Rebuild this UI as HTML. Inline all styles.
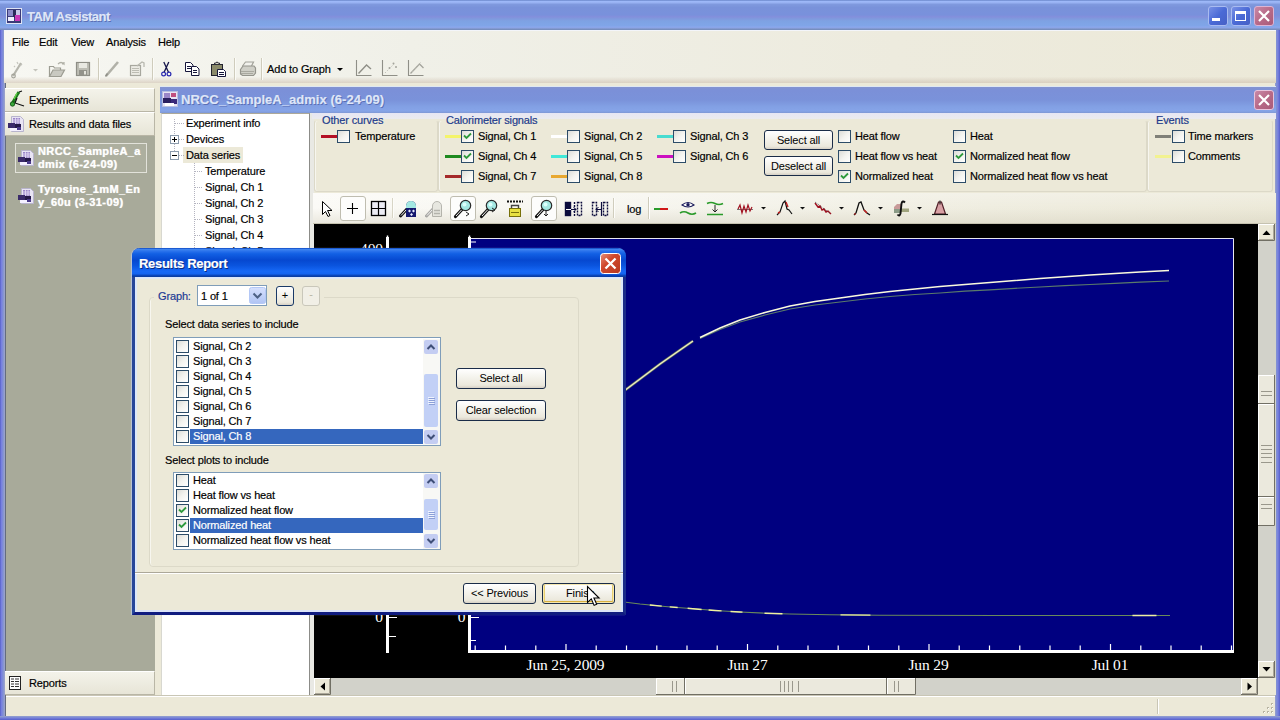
<!DOCTYPE html>
<html>
<head>
<meta charset="utf-8">
<title>TAM Assistant</title>
<style>
*{box-sizing:border-box;margin:0;padding:0}
html,body{width:1280px;height:720px;overflow:hidden;background:#ece9d8}
body{font-family:"Liberation Sans",sans-serif;font-size:11px;letter-spacing:-0.14px;color:#000;position:relative;-webkit-font-smoothing:antialiased}
.a{position:absolute}
.t{position:absolute;white-space:nowrap;line-height:14px;height:14px;-webkit-text-stroke:.18px currentColor}
.bl{color:#203a8c}
.lp{font-weight:bold;color:#fff;font-size:11px;letter-spacing:.4px;line-height:13px;height:13px;text-shadow:0 0 1px #d8d8d0}
/* checkbox */
.cb{position:absolute;width:13px;height:13px;border:1px solid #2c4c68;background:linear-gradient(135deg,#dcdcd7 0%,#f3f3ef 50%,#ffffff 100%)}
.cb svg{position:absolute;left:1px;top:1px}
.ln{position:absolute;height:3px}
.gb{border:1px solid #dcd9c8;border-radius:3px;box-shadow:inset 1px 0 0 #f7f6ef}
.gb.nt{border-top-color:transparent}
.gl{padding:0 3px}
/* XP button */
.btn{position:absolute;border:1px solid #1a2c48;border-radius:3px;background:linear-gradient(180deg,#ffffff 0%,#f5f4ee 40%,#ebe8dc 85%,#d6d0c5 100%);text-align:center;font-size:11px;line-height:20px}
/* flat side button */
.sb{position:absolute;left:5px;width:150px;height:24px;background:linear-gradient(180deg,#f4f3ea,#e7e5d7);border-top:1px solid #fff;border-bottom:1px solid #b9b6a6;border-right:1px solid #b9b6a6}
</style>
</head>
<body>
<!-- ============ OUTER WINDOW FRAME ============ -->
<div class="a" id="titlebar" style="left:0;top:0;width:1280px;height:30px;background:linear-gradient(180deg,#6784c8 0%,#9db8f8 5%,#9ab4f4 8%,#7f99de 15%,#7992da 25%,#7991dc 50%,#848fdc 56%,#7f9ade 63%,#7ea2e3 70%,#80a5e8 85%,#8ca7ec 91%,#8096cc 96%,#7188b4 100%)"></div>
<div class="a" style="left:0;top:30px;width:6px;height:690px;background:linear-gradient(90deg,#5560c8 0px,#7880e0 1.500px,#8090d4 3px,#98a0cc 4.500px,#9aa0cc 5px,#646c80 5px,#646c80 6px)"></div>
<div class="a" style="left:1275px;top:30px;width:5px;height:690px;background:linear-gradient(90deg,#9aa0cc 0px,#8090d4 1.500px,#7880e0 3px,#5560c8 5px)"></div>
<div class="a" style="left:0;top:716px;width:1280px;height:4px;background:linear-gradient(180deg,#98a0cc 0%,#8090d4 30%,#7078d8 60%,#5560c8 100%)"></div>
<div class="t" style="left:27px;top:9px;font-family:'Liberation Sans',sans-serif;font-weight:bold;font-size:13px;letter-spacing:-.45px;color:#dfe6f8;line-height:16px;height:16px;text-shadow:1px 1px 0 #5a6fb5">TAM Assistant</div>

<!-- menu bar -->
<div class="a" id="menubar" style="left:4px;top:30px;width:1272px;height:24px;border-top:1px solid #f3f5fa;background:linear-gradient(90deg,#f7f7f2 0%,#f0f0e8 32%,#edebde 70%,#ece9d8 100%)"></div>
<div class="t" style="left:12px;top:35px">File</div>
<div class="t" style="left:39px;top:35px">Edit</div>
<div class="t" style="left:71px;top:35px">View</div>
<div class="t" style="left:106px;top:35px">Analysis</div>
<div class="t" style="left:158px;top:35px">Help</div>

<!-- toolbar -->
<div class="a" id="toolbar" style="left:4px;top:54px;width:1272px;height:29px;background:linear-gradient(180deg,rgba(255,255,255,0) 0%,rgba(255,255,255,0) 78%,rgba(205,190,172,.6) 100%),linear-gradient(90deg,#f7f7f2 0%,#f0f0e8 32%,#edebde 70%,#ece9d8 100%)"></div>
<div class="t" style="left:267px;top:62px">Add to Graph</div>


<!-- title bar buttons + app icon + toolbar icons -->
<svg class="a" style="left:0;top:0" width="1280" height="88" viewBox="0 0 1280 88">
 <defs>
  <linearGradient id="gb" x1="0" y1="0" x2="1" y2="1"><stop offset="0" stop-color="#7b93e6"/><stop offset="0.5" stop-color="#4a6ad6"/><stop offset="1" stop-color="#4660c4"/></linearGradient>
  <linearGradient id="gr" x1="0" y1="0" x2="1" y2="1"><stop offset="0" stop-color="#c98aa8"/><stop offset="0.5" stop-color="#b86a88"/><stop offset="1" stop-color="#a85a78"/></linearGradient>
 </defs>
 <!-- app icon -->
 <g id="appicon">
  <rect x="6.5" y="8.5" width="15" height="15" fill="#3a3a78" stroke="#dfe4f4"/>
  <rect x="8" y="10" width="5" height="6" fill="#8a8ac8"/>
  <rect x="13" y="10" width="3" height="8" fill="#2a2a5a"/>
  <rect x="16" y="10" width="4" height="5" fill="#c8c8e8"/>
  <rect x="8" y="17" width="6" height="4" fill="#f0f0ff"/>
  <rect x="15" y="15" width="5" height="6" fill="#c838b8"/>
 </g>
 <!-- min -->
 <rect x="1208.5" y="6.5" width="19" height="19" rx="2.5" fill="url(#gb)" stroke="#a9bbf0"/>
 <rect x="1212" y="18" width="8" height="3" fill="#fff"/>
 <!-- max -->
 <rect x="1231.5" y="6.5" width="19" height="19" rx="2.5" fill="url(#gb)" stroke="#a9bbf0"/>
 <rect x="1235.500" y="11.500" width="10" height="9" fill="none" stroke="#fff"/>
 <rect x="1235" y="11" width="11" height="3" fill="#fff"/>
 <!-- close -->
 <rect x="1254.5" y="6.5" width="19" height="19" rx="2.5" fill="url(#gr)" stroke="#dcb4d4"/>
 <path d="M1259 11 L1269 21 M1269 11 L1259 21" stroke="#fff" stroke-width="2.2" fill="none"/>

 <!-- ===== toolbar icons (y 54..84) ===== -->
 <g fill="none" stroke="#a9a99f" stroke-width="1.2">
  <!-- wand -->
  <path d="M13 76 L21 63" stroke-width="2.2" stroke="#b5b5ac"/>
  <circle cx="13.500" cy="76" r="1.8" stroke="#a3a39a"/>
  <path d="M17 62 L18 64 M22 64 L20 66 M14 66 l1 1" stroke="#c4c4bc"/>
  <!-- small drop arrow -->
  <path d="M33 69 l5 0 l-2.500 2.500 z" fill="#c4c4bc" stroke="none"/>
  <!-- open folder -->
  <path d="M49.500 76.500 v-10 h4 l1 1.500 h6 v2.500" stroke="#9c9c92"/>
  <path d="M49.500 76.500 l3.500 -6.500 h11.500 l-3.500 6.500 z" fill="#c9c9c1" stroke="#9c9c92"/>
  <path d="M58 64 q3 -3 6 0 l0 -2 m0 2 l-2 0" stroke="#b0b0a6"/>
  <!-- floppy -->
  <rect x="76.500" y="62.500" width="13" height="13" fill="#bdbdb4" stroke="#8e8e86"/>
  <rect x="79" y="63" width="8" height="5" fill="#e9e9e2" stroke="none"/>
  <rect x="79" y="70" width="8" height="5.500" fill="#93938b" stroke="none"/>
  <rect x="84" y="71" width="2" height="3.500" fill="#e4e4dc" stroke="none"/>
  <!-- separator -->
  <path d="M98.500 58 v22" stroke="#cfccbc" stroke-width="1"/>
  <path d="M99.500 58 v22" stroke="#fbfbf7" stroke-width="1"/>
  <!-- pen -->
  <path d="M106 76 L118 62" stroke="#b1b1a8" stroke-width="2.600"/>
  <path d="M105.500 76.500 l2 -3" stroke="#8f8f87" stroke-width="1.400"/>
  <!-- properties -->
  <rect x="130.500" y="65.500" width="10" height="10" fill="#ecebe4" stroke="#a7a79e"/>
  <path d="M132 68.500 h7 M132 70.500 h7 M132 72.500 h7" stroke="#bcbcb3" stroke-width="1"/>
  <path d="M137 66 l5 -4 l2 1 l0 4" stroke="#b8b8af" stroke-width="1.300"/>
  <path d="M152.500 58 v22" stroke="#cfccbc" stroke-width="1"/>
  <path d="M153.500 58 v22" stroke="#fbfbf7" stroke-width="1"/>
  <!-- scissors -->
  <path d="M163.800 62 L168.600 72.500 M168.800 62 L164 72.500" stroke="#15154a" stroke-width="1.300"/>
  <circle cx="163.600" cy="74" r="1.900" stroke="#2a2ab0" stroke-width="1.200"/>
  <circle cx="169" cy="74" r="1.900" stroke="#2a2ab0" stroke-width="1.200"/>
  <!-- copy -->
  <path d="M185.500 62.500 h5 l2.500 2.500 v6.500 h-7.500 z" fill="#fff" stroke="#15153a" stroke-width="1"/>
  <path d="M187 66.500 h4 M187 68.500 h4" stroke="#15153a" stroke-width="1"/>
  <path d="M191.500 66.500 h5 l2.500 2.500 v6.500 h-7.500 z" fill="#fff" stroke="#15153a" stroke-width="1"/>
  <path d="M193 70.500 h4 M193 72.500 h4" stroke="#15153a" stroke-width="1"/>
  <!-- paste -->
  <rect x="211.500" y="64.500" width="11" height="11" fill="#8a8a6a" stroke="#23232e" stroke-width="1"/>
  <path d="M214.500 64.500 v-1.500 h1.500 l1 -1.200 l1 1.200 h1.500 v1.500 z" fill="#d8d8c8" stroke="#23232e" stroke-width="0.900"/>
  <path d="M217.500 69.500 h6 l2 2 v5 h-8 z" fill="#fff" stroke="#15153a" stroke-width="1"/>
  <path d="M219 72.500 h5 M219 74.500 h5" stroke="#15153a" stroke-width="1"/>
  <path d="M234.500 58 v22" stroke="#cfccbc" stroke-width="1"/>
  <path d="M235.500 58 v22" stroke="#fbfbf7" stroke-width="1"/>
  <!-- printer -->
  <path d="M242.500 66 l3 -4 h8 l-2 4" fill="#f1f1ec" stroke="#a2a29a"/>
  <path d="M240.500 69.500 l2.500 -3.500 h11 l1.500 2 v5 l-2 2.500 h-11 l-2 -1.500 z" fill="#cfcfc7" stroke="#94948c"/>
  <path d="M241 71.500 h13 M241 73.500 h12" stroke="#a9a9a0" stroke-width="1"/>
  <path d="M261.500 58 v22" stroke="#cfccbc" stroke-width="1"/>
  <path d="M262.500 58 v22" stroke="#fbfbf7" stroke-width="1"/>
  <!-- dropdown arrow -->
  <path d="M337 68 h6 l-3 3 z" fill="#000" stroke="none"/>
  <!-- graph icons -->
  <path d="M356.500 60 v15.500 h15" stroke="#8f8f87" stroke-width="1.100"/>
  <path d="M358.500 73.500 l8 -8.500 l4.500 4" stroke="#8f8f87" stroke-width="1.400"/>
  <path d="M382.500 60 v15.500 h15" stroke="#8f8f87" stroke-width="1.100"/>
  <path d="M385 73 l9 -9" stroke="#c4c4bc" stroke-width="1" stroke-dasharray="1.500 1.500"/>
  <circle cx="389.500" cy="68" r="1" fill="#a4a49c" stroke="none"/><circle cx="393.500" cy="63.500" r="1" fill="#a4a49c" stroke="none"/><circle cx="396" cy="67" r="1" fill="#a4a49c" stroke="none"/>
  <path d="M408.500 60 v15.500 h15" stroke="#8f8f87" stroke-width="1.100"/>
  <path d="M410.500 73.500 l9 -9.500 l4 4" stroke="#a4a49c" stroke-width="1.300"/>
  <path d="M412 72 l9 -10" stroke="#c4c4bc" stroke-width="0.800" stroke-dasharray="1 1"/>
 </g>
</svg>

<!-- ============ LEFT PANEL ============ -->
<div class="a" style="left:6px;top:84px;width:1269px;height:632px;background:#ece9d8"></div>
<div class="a" id="leftgrey" style="left:6px;top:136px;width:149px;height:535px;background:#a8aa9a"></div>
<div class="sb" style="top:88px"></div>
<div class="sb" style="top:112px"></div>
<div class="sb" style="top:671px"></div>
<div class="t" style="left:29px;top:93px">Experiments</div>
<div class="t" style="left:29px;top:117px">Results and data files</div>
<div class="t" style="left:29px;top:676px">Reports</div>


<!-- left panel items -->
<div class="a" style="left:15px;top:143px;width:132px;height:30px;border:1px solid #e2e2da;background:#adaf9f"></div>
<div class="t lp" style="left:38px;top:145px">NRCC_SampleA_a</div>
<div class="t lp" style="left:38px;top:158px">dmix (6-24-09)</div>
<div class="t lp" style="left:38px;top:183px">Tyrosine_1mM_En</div>
<div class="t lp" style="left:38px;top:196px">y_60u (3-31-09)</div>
<svg class="a" style="left:0;top:84px" width="160" height="620" viewBox="0 84 160 620">
 <defs>
  <g id="fileico">
   <path d="M3.500 0.500 h9 l3 3 v12 h-12 z" fill="#e8e4f4" stroke="#b8b4cc" stroke-width="1"/>
   <rect x="5" y="2" width="7" height="6" fill="#9a86c8"/>
   <path d="M5 4 h7 M5 6 h7 M7.500 2 v6 M10 2 v6" stroke="#e8e0f8" stroke-width="0.800"/>
   <rect x="0" y="7" width="7" height="5" fill="#3a2a6a"/>
   <rect x="7" y="8" width="6" height="4" fill="#241848"/>
   <rect x="2" y="12" width="11" height="3" fill="#f4f0ff"/>
   <rect x="9" y="11" width="4" height="3" fill="#4a3a8a"/>
  </g>
 </defs>
 <!-- experiments icon -->
 <path d="M12 104 l5 -9 l2 -3" stroke="#1a7a1a" stroke-width="3" fill="none"/>
 <path d="M14 99 l3 -6" stroke="#6ad84a" stroke-width="1.200" fill="none"/>
 <path d="M19 92 l3 -1 M17 98 l-2 5 l9 3" stroke="#111" stroke-width="1.200" fill="none"/>
 <circle cx="12.500" cy="104" r="2.200" fill="#3aa83a" stroke="#0a4a0a" stroke-width="0.800"/>
 <use href="#fileico" x="8" y="116"/>
 <use href="#fileico" x="18" y="150"/>
 <use href="#fileico" x="18" y="188"/>
 <!-- reports icon -->
 <rect x="9.500" y="676.500" width="11" height="13" fill="#fff" stroke="#222"/>
 <path d="M11 679 h3 M15 679 h4 M11 681.500 h3 M15 681.500 h4 M11 684 h3 M15 684 h4 M11 686.500 h3 M15 686.500 h4" stroke="#333" stroke-width="1"/>
</svg>

<!-- ============ CHILD WINDOW ============ -->
<div class="a" style="left:160px;top:86px;width:1116px;height:1px;background:#dfe8f2"></div>
<div class="a" id="childtitle" style="left:160px;top:87px;width:1116px;height:26px;background:linear-gradient(180deg,#8493d0 0%,#7b90d8 12%,#7a92da 50%,#82a0e4 75%,#86a4e8 92%,#7f98d4 100%)"></div>
<div class="t" style="left:181px;top:92px;font-weight:bold;font-size:13px;letter-spacing:.03px;color:#dfe6f8;line-height:16px;height:16px;text-shadow:1px 1px 0 #5a6fb5">NRCC_SampleA_admix (6-24-09)</div>

<!-- tree -->
<div class="a" style="left:310px;top:113px;width:4px;height:582px;background:#e9e9e4"></div>
<div class="a" id="tree" style="left:161px;top:113px;width:149px;height:583px;background:#fff;border:1px solid #aca899;border-left-color:#d8d8d0;border-right-color:#8c8c88"></div>


<div class="a" style="left:183px;top:147px;width:60px;height:16px;background:#ece9d8"></div>
<div class="t" style="left:186px;top:116px">Experiment info</div>
<div class="t" style="left:186px;top:132px">Devices</div>
<div class="t" style="left:186px;top:148px">Data series</div>
<div class="t" style="left:205px;top:164px">Temperature</div>
<div class="t" style="left:205px;top:180px">Signal, Ch 1</div>
<div class="t" style="left:205px;top:196px">Signal, Ch 2</div>
<div class="t" style="left:205px;top:212px">Signal, Ch 3</div>
<div class="t" style="left:205px;top:228px">Signal, Ch 4</div>
<div class="t" style="left:205px;top:244px">Signal, Ch 5</div>
<svg class="a" style="left:160px;top:112px" width="152" height="150" viewBox="160 112 152 150">
 <g stroke="#b4b4c0" stroke-width="1" stroke-dasharray="1 1" fill="none">
  <path d="M175 123.500 h9"/>
  <path d="M174.500 119 v16 M174.500 144 v7"/>
  <path d="M179 139.500 h5 M179 155.500 h5"/>
  <path d="M194.500 163 v90"/>
  <path d="M195 171.500 h8 M195 187.500 h8 M195 203.500 h8 M195 219.500 h8 M195 235.500 h8 M195 251.500 h8"/>
 </g>
 <rect x="170.500" y="135.500" width="8" height="8" fill="#fff" stroke="#8c9cae"/>
 <path d="M172 139.500 h5 M174.500 137 v5" stroke="#000" stroke-width="1"/>
 <rect x="170.500" y="151.500" width="8" height="8" fill="#fff" stroke="#8c9cae"/>
 <path d="M172 155.500 h5" stroke="#000" stroke-width="1"/>
</svg>

<!-- ===== checkbox panel ===== -->
<div class="a" style="left:312px;top:113px;width:964px;height:6px;background:linear-gradient(180deg,#e6e6f4,#ebebee)"></div>
<div class="a gb nt" style="left:314px;top:120px;width:124px;height:72px"></div>
<div class="a gb nt" style="left:438px;top:120px;width:709px;height:72px"></div>
<div class="a gb nt" style="left:1147px;top:120px;width:126px;height:72px"></div>
<div class="t bl gl" style="left:319px;top:113px">Other curves</div>
<div class="t bl gl" style="left:443px;top:113px">Calorimeter signals</div>
<div class="t bl gl" style="left:1153px;top:113px">Events</div>
<div class="ln" style="left:321px;top:135px;width:16px;background:#b41024"></div>
<div class="cb" style="left:337px;top:130px"></div>
<div class="t" style="left:355px;top:129px">Temperature</div>
<div class="ln" style="left:445px;top:135px;width:16px;background:#f4f46a"></div>
<div class="cb on" style="left:461px;top:130px"><svg width="9" height="9" viewBox="0 0 9 9"><path d="M1 3.500 L3.500 6 L8 1.500" stroke="#2f9a3c" stroke-width="1.800" fill="none"/></svg></div>
<div class="t" style="left:478px;top:129px">Signal, Ch 1</div>
<div class="ln" style="left:445px;top:155px;width:16px;background:#1e8a1e"></div>
<div class="cb on" style="left:461px;top:150px"><svg width="9" height="9" viewBox="0 0 9 9"><path d="M1 3.500 L3.500 6 L8 1.500" stroke="#2f9a3c" stroke-width="1.800" fill="none"/></svg></div>
<div class="t" style="left:478px;top:149px">Signal, Ch 4</div>
<div class="ln" style="left:445px;top:175px;width:16px;background:#a52a2a"></div>
<div class="cb" style="left:461px;top:170px"></div>
<div class="t" style="left:478px;top:169px">Signal, Ch 7</div>
<div class="ln" style="left:551px;top:135px;width:16px;background:#ffffff"></div>
<div class="cb" style="left:567px;top:130px"></div>
<div class="t" style="left:584px;top:129px">Signal, Ch 2</div>
<div class="ln" style="left:551px;top:155px;width:16px;background:#40e8d8"></div>
<div class="cb" style="left:567px;top:150px"></div>
<div class="t" style="left:584px;top:149px">Signal, Ch 5</div>
<div class="ln" style="left:551px;top:175px;width:16px;background:#e8a830"></div>
<div class="cb" style="left:567px;top:170px"></div>
<div class="t" style="left:584px;top:169px">Signal, Ch 8</div>
<div class="ln" style="left:657px;top:135px;width:16px;background:#48dcd0"></div>
<div class="cb" style="left:673px;top:130px"></div>
<div class="t" style="left:690px;top:129px">Signal, Ch 3</div>
<div class="ln" style="left:657px;top:155px;width:16px;background:#cc10c0"></div>
<div class="cb" style="left:673px;top:150px"></div>
<div class="t" style="left:690px;top:149px">Signal, Ch 6</div>
<div class="btn" style="left:764px;top:130px;width:69px;height:20px;line-height:18px">Select all</div>
<div class="btn" style="left:764px;top:156px;width:69px;height:20px;line-height:18px">Deselect all</div>
<div class="cb" style="left:838px;top:130px"></div>
<div class="t" style="left:855px;top:129px">Heat flow</div>
<div class="cb" style="left:838px;top:150px"></div>
<div class="t" style="left:855px;top:149px">Heat flow vs heat</div>
<div class="cb on" style="left:838px;top:170px"><svg width="9" height="9" viewBox="0 0 9 9"><path d="M1 3.500 L3.500 6 L8 1.500" stroke="#2f9a3c" stroke-width="1.800" fill="none"/></svg></div>
<div class="t" style="left:855px;top:169px">Normalized heat</div>
<div class="cb" style="left:953px;top:130px"></div>
<div class="t" style="left:970px;top:129px">Heat</div>
<div class="cb on" style="left:953px;top:150px"><svg width="9" height="9" viewBox="0 0 9 9"><path d="M1 3.500 L3.500 6 L8 1.500" stroke="#2f9a3c" stroke-width="1.800" fill="none"/></svg></div>
<div class="t" style="left:970px;top:149px">Normalized heat flow</div>
<div class="cb" style="left:953px;top:170px"></div>
<div class="t" style="left:970px;top:169px">Normalized heat flow vs heat</div>
<div class="ln" style="left:1155px;top:135px;width:16px;background:#808078"></div>
<div class="cb" style="left:1172px;top:130px"></div>
<div class="t" style="left:1188px;top:129px">Time markers</div>
<div class="ln" style="left:1155px;top:155px;width:16px;background:#f2f290"></div>
<div class="cb" style="left:1172px;top:150px"></div>
<div class="t" style="left:1188px;top:149px">Comments</div>
<div class="a" id="ctb" style="left:313px;top:193px;width:963px;height:31px;background:linear-gradient(180deg,rgba(255,255,255,.25) 0%,rgba(255,255,255,0) 50%,rgba(205,200,180,.35) 100%),linear-gradient(90deg,#fbfaf6 0%,#f6f5ee 35%,#efede0 70%,#ece9d8 100%);border-bottom:1px solid #c5c2b0"></div>
<div class="a" style="left:340px;top:196px;width:26px;height:25px;background:#fdfdfc;border:1px solid #bfbdb0;border-radius:3px"></div>
<div class="a" style="left:450px;top:196px;width:26px;height:25px;background:#fdfdfc;border:1px solid #bfbdb0;border-radius:3px"></div>
<div class="a" style="left:531px;top:196px;width:26px;height:25px;background:#fdfdfc;border:1px solid #bfbdb0;border-radius:3px"></div>
<div class="t" style="left:627px;top:202px">log</div>

<!-- child title icon + close, chart toolbar icons -->
<svg class="a" style="left:160px;top:86px" width="1120" height="140" viewBox="160 86 1120 140">
 <defs>
  <linearGradient id="gr2" x1="0" y1="0" x2="1" y2="1"><stop offset="0" stop-color="#c98aa8"/><stop offset="0.500" stop-color="#b86a88"/><stop offset="1" stop-color="#a85a78"/></linearGradient>
  <g id="mag">
   <path d="M1 1.500 L-5.500 8.500" stroke="#111" stroke-width="3.200" stroke-linecap="round" fill="none"/>
   <path d="M0.500 2 L-5 8" stroke="#f4f4f4" stroke-width="1" fill="none"/>
   <circle cx="4.500" cy="-2.500" r="5.200" fill="#a4e8e2" stroke="#2a2a2a" stroke-width="1.200"/>
   <circle cx="3.500" cy="-3.500" r="2" fill="#dcfffb" stroke="none"/>
  </g>
  <path id="dd" d="M0 0 h5 l-2.500 2.500 z" fill="#111"/>
 </defs>
 <!-- child icon -->
 <rect x="162.500" y="91.500" width="15" height="15" fill="#e8e4f4" stroke="#b8c0e0"/>
 <rect x="164" y="93" width="6" height="5" fill="#9a86c8"/>
 <rect x="171" y="93" width="5" height="4" fill="#c05080"/>
 <rect x="163" y="98" width="8" height="5" fill="#2a2060"/>
 <rect x="171" y="99" width="6" height="5" fill="#3a2a7a"/>
 <rect x="165" y="103" width="9" height="3" fill="#fff"/>
 <!-- child close -->
 <rect x="1254.500" y="90.500" width="19" height="19" rx="2.500" fill="url(#gr2)" stroke="#e8c4dc"/>
 <path d="M1259 95 L1269 105 M1269 95 L1259 105" stroke="#fff" stroke-width="2.200" fill="none"/>

 <!-- pointer -->
 <path d="M322.500 201.500 v13 l3 -3 l2.500 5 l2 -1 l-2.500 -5 h4.500 z" fill="#fff" stroke="#000" stroke-width="1"/>
 <!-- plus -->
 <path d="M347 208.500 h11 M352.500 203 v11" stroke="#000" stroke-width="1.100"/>
 <!-- target box -->
 <rect x="371.500" y="201.500" width="14" height="14" fill="#ececf4" stroke="#000" stroke-width="1.300"/>
 <path d="M371 208.500 h15 M378.500 201 v15" stroke="#000" stroke-width="1.200"/>
 <path d="M392.500 198 v20" stroke="#d8d5c6"/><path d="M393.500 198 v20" stroke="#fdfdfa"/>
 <!-- zoom icons -->
 <path d="M407 209 L400.500 216" stroke="#111" stroke-width="3" stroke-linecap="round" fill="none"/><path d="M406.500 209.500 L401 215.500" stroke="#f4f4f4" stroke-width="1" fill="none"/>
 <path d="M406 217 v-11 a5 5 0 0 1 10 0 v11 z" fill="#14186e"/>
 <path d="M406 208 v-2 a5 5 0 0 1 10 0 v2 z" fill="#a4e8e2"/>
 <path d="M408 211 l1.500 -1.500 l1.500 1.500 l-1.500 1.500 z M412 211 l1.500 -1.500 l1.500 1.500 l-1.500 1.500 z M410 214.500 l1.500 -1.500 l1.500 1.500 l-1.500 1.500 z" fill="#e8ecff"/>
 <g opacity="0.600"><path d="M433 209 L426.500 216" stroke="#777" stroke-width="3" stroke-linecap="round" fill="none"/><path d="M432.500 209.500 L427 215.500" stroke="#f4f4f4" stroke-width="1" fill="none"/>
 <path d="M432.500 216.500 v-10.500 a4.500 4.500 0 0 1 9 0 v10.500 z" fill="#dcdcd4" stroke="#8a8a82"/>
 <path d="M434 210.500 h6 M434 213.500 h6" stroke="#8a8a82" stroke-width="1.400"/></g>
 <use href="#mag" x="461" y="208"/><path d="M466 212 l3 2 l-3 2" stroke="#222" stroke-width="1" fill="none"/>
 <use href="#mag" x="487" y="208"/><path d="M492 208 l3 2 l-3 2" stroke="#222" stroke-width="1" fill="none"/>
 <!-- lock -->
 <path d="M507 201.500 h16" stroke="#111" stroke-width="2" stroke-dasharray="2 1"/>
 <path d="M511.500 209 v-3.500 h7 v3.500" stroke="#444" stroke-width="1.400" fill="none"/>
 <rect x="509.500" y="208.500" width="11" height="8" fill="#e8e040" stroke="#77700a"/>
 <path d="M511 212.500 h8" stroke="#77700a"/>
 <use href="#mag" x="542" y="208"/><path d="M546 210 v6 m-2 -2 l2 2 l2 -2" stroke="#222" stroke-width="1" fill="none"/>
 <!-- marker icons -->
 <g stroke="#0c0c3c" fill="none" stroke-width="1.400">
  <rect x="565.500" y="202.500" width="5" height="13" fill="#0c0c3c"/>
  <path d="M574.500 202 v14" stroke-dasharray="2 1"/>
  <rect x="577.500" y="202.500" width="4" height="13" stroke-dasharray="2 1"/>
  <path d="M566 209.500 h9 m-2.500 -2.500 l2.500 2.500 l-2.500 2.500" stroke="#fff" stroke-width="1"/>
  <path d="M571 209.500 h5 m-2.500 -2.500 l2.500 2.500 l-2.500 2.500" stroke-width="1"/>
  <rect x="592.500" y="202.500" width="4" height="13" stroke-dasharray="2 1"/>
  <rect x="603.500" y="202.500" width="4" height="13" stroke-dasharray="2 1"/>
  <path d="M601.500 202 v14" stroke-width="1.200"/>
  <path d="M596 209.500 h5 m-2.500 -2.500 l-2.500 2.500 l2.500 2.500" stroke-width="1"/>
 </g>
 <path d="M613.500 198 v20" stroke="#d0cdbd"/><path d="M614.500 198 v20" stroke="#fdfdfa"/>
 <path d="M648.500 197 v22" stroke="#cfccbc"/><path d="M649.500 197 v22" stroke="#fff"/>
 <!-- red/green dash -->
 <path d="M654 209 h6" stroke="#2a9a2a" stroke-width="2"/><path d="M660 209 h8" stroke="#d01818" stroke-width="2"/>
 <!-- eye -->
 <path d="M682 205 q6 -5 12 0 q-6 4 -12 0 z" fill="#fff" stroke="#1a1a5a" stroke-width="1.100"/><circle cx="688" cy="204.800" r="1.700" fill="#1a1a5a"/>
 <path d="M680 213 q4 -2.500 8 0 t8 0" stroke="#2a9a2a" stroke-width="1.600" fill="none"/>
 <!-- arrows between lines -->
 <path d="M707 203.500 q4 -2 8 0 t8 0 M707 214.500 h16" stroke="#2a9a2a" stroke-width="1.600" fill="none"/>
 <path d="M715 205 v7 m-2.500 -2.500 l2.500 2.500 l2.500 -2.500" stroke="#222" stroke-width="1" fill="none"/>
 <!-- wave -->
 <path d="M737 209.500 h16" stroke="#555" stroke-width="0.800"/>
 <path d="M738 209 l2 -4 l2 8 l2 -7 l2 6 l2 -7 l2 6 l2 -4" stroke="#a01020" stroke-width="1.200" fill="none"/>
 <use href="#dd" x="761" y="207"/>
 <!-- peak -->
 <path d="M777 215 l3 -3 l3 -9 l2 -2 l2 8 l2 1 l3 4" stroke="#111" stroke-width="1.200" fill="none"/>
 <path d="M778 213 l2 -1 M786 202 l2 5" stroke="#c02020" stroke-width="1.400" fill="none"/>
 <use href="#dd" x="800" y="207"/>
 <!-- decreasing -->
 <path d="M815 203 l3 4 l2 -1 l2 4 l2 -1 l2 3 l2 -1 l3 3" stroke="#a01020" stroke-width="1.400" fill="none"/>
 <path d="M815 202 l16 12" stroke="#333" stroke-width="0.700" stroke-dasharray="1 1"/>
 <use href="#dd" x="839" y="207"/>
 <!-- peak2 -->
 <path d="M854 215 l2 -2 l3 -10 l2 -1 l3 8 l3 3 l3 2" stroke="#111" stroke-width="1.300" fill="none"/>
 <path d="M854.500 214.500 l1 -1 M864 210 l3 3" stroke="#c02020" stroke-width="1.500"/>
 <use href="#dd" x="878" y="207"/>
 <!-- integral -->
 <path d="M894 213 v-6 l3 -3 h4 v9 z" fill="#c89a98" stroke="none"/><path d="M894 213 v-4 h7 v4 z" fill="#8a9a86" stroke="none"/><path d="M901 208.500 h8 v3.500 h-8 z" fill="#a0a47e" stroke="none"/>
 <path d="M897.500 214.500 q2 2.500 3 -1 l1 -10 q1 -3.500 3.500 -1" stroke="#111" stroke-width="1.900" fill="none"/>
 <use href="#dd" x="917" y="207"/>
 <!-- A peak -->
 <path d="M934.500 214 l4 -12 h3 l4 12 z" fill="#d8a0a4" stroke="#502028" stroke-width="1.200"/>
 <path d="M932 214.500 h16" stroke="#111" stroke-width="1.200"/>
 <path d="M940 200.500 v4" stroke="#111" stroke-width="1"/>
</svg>

<!-- graph area -->

<svg class="a" style="left:314px;top:224px" width="944" height="454" viewBox="314 224 944 454">
 <rect x="314" y="224" width="944" height="454" fill="#000"/>
 <rect x="470" y="238" width="764" height="413" fill="#000080"/>
 <!-- plot frame -->
 <path d="M470 238.500 H1233.500 V651" stroke="#e8e8f0" stroke-width="1" fill="none"/>
 <!-- axes -->
 <rect x="386" y="237" width="3" height="416" fill="#fff"/>
 <path d="M387.500 235.500 v2" stroke="#fff" stroke-width="1.500"/>
 <rect x="468" y="237" width="3" height="416" fill="#fff"/>
 <path d="M469.500 235.500 v2" stroke="#fff" stroke-width="1.500"/>
 <rect x="468" y="650" width="766" height="3" fill="#fff"/>
 <path d="M475.2 650 v-4.5 M505.5 650 v-4.5 M535.8 650 v-4.5 M566.0 650 v-6 M596.2 650 v-4.5 M626.5 650 v-4.5 M656.8 650 v-4.5 M687.0 650 v-4.5 M717.2 650 v-4.5 M747.5 650 v-6 M777.8 650 v-4.5 M808.0 650 v-4.5 M838.2 650 v-4.5 M868.5 650 v-4.5 M898.8 650 v-4.5 M929.0 650 v-6 M959.2 650 v-4.5 M989.5 650 v-4.5 M1019.8 650 v-4.5 M1050.0 650 v-4.5 M1080.2 650 v-4.5 M1110.5 650 v-6 M1140.8 650 v-4.5 M1171.0 650 v-4.5 M1201.2 650 v-4.5 M1231.5 650 v-4.5" stroke="#fff" stroke-width="1.200" fill="none"/>
 <!-- y ticks -->
 <path d="M389 617.500 h8 M389 636.500 h7 M471 617.500 h8 M471 640.500 h5 M471 242 h5" stroke="#fff" stroke-width="1.200"/>
 <g font-family="'Liberation Serif',serif" font-size="15.5" fill="#fff" text-anchor="middle">
  <text x="371.500" y="254">400</text>
  <text x="379" y="621.500">0</text>
  <text x="461.500" y="621.500">0</text>
  <text x="565.500" y="670">Jun 25, 2009</text>
  <text x="747.500" y="670">Jun 27</text>
  <text x="928.500" y="670">Jun 29</text>
  <text x="1110" y="670">Jul 01</text>
 </g>
 <!-- curves -->
 <polyline points="620,394 640,379 660,364 680,350 693,341" stroke="#6a7a5a" stroke-width="2.600" fill="none"/>
 <polyline points="620,394 640,379 660,364 680,350 693,341" stroke="#ecebc8" stroke-width="1.300" fill="none"/>
 <polyline points="700,338.5 720,329.5 740,322 765,315 790,309 815,305 840,302 865,299 890,296.5 915,294.5 940,293 965,291.2 990,289.8 1015,288.3 1040,287 1065,285.6 1090,284.5 1115,283.3 1140,282.2 1169,281" stroke="#5a7a6a" stroke-width="1.200" fill="none"/>
 <polyline points="700,337.5 720,328 740,320 765,312.5 790,306 815,301.5 840,298 865,294.5 890,291.5 915,289 940,286.5 965,284.5 990,282.5 1015,280.5 1040,278.5 1065,276.8 1090,275 1115,273.5 1140,272 1169,270.5" stroke="#fafadc" stroke-width="1.500" fill="none"/>
 <polyline points="620,601.5 640,604 665,606.5 690,608.5 715,610.5 740,612 765,613.2 790,614 830,614.8 880,615.2 1000,615.5 1170,615.5" stroke="#6a8a5a" stroke-width="1.100" fill="none"/>
 <polyline points="620,601.5 640,604 665,606.5 690,608.5 715,610.5 740,612 765,613.2 790,614 830,614.8 880,615.2 1000,615.5 1170,615.5" stroke="#eef0a0" stroke-width="1.400" fill="none" stroke-dasharray="12 8 8 10 14 7 13 9 12 22 18 58 30 262 24 400" stroke-dashoffset="-30"/>
</svg>



<!-- scrollbars + status bar -->
<svg class="a" style="left:313px;top:224px" width="963" height="492" viewBox="313 224 963 492">
 <defs>
  <g id="sbtn"><rect x="0" y="0" width="17" height="17" fill="#ece9d8"/><path d="M0.500 16.500 V0.500 H16.500" stroke="#fff" fill="none"/><path d="M16.500 0 V16.500 H0" stroke="#716f64" fill="none"/><path d="M15.500 1 V15.500 H1" stroke="#aca899" fill="none"/></g>
 </defs>
 <!-- vertical -->
 <rect x="1258" y="224" width="18" height="454" fill="#d2d2ca"/>
 <use href="#sbtn" x="1258" y="224"/><path d="M1262.500 235 h8 l-4 -4.500 z" fill="#000"/>
 <use href="#sbtn" x="1258" y="661"/><path d="M1262.500 667 h8 l-4 4.500 z" fill="#000"/>
 <rect x="1258" y="375" width="17" height="151" fill="#ebe9dd"/>
 <path d="M1258.500 526 V375.500 H1275" stroke="#fff" fill="none"/>
 <path d="M1274.500 375 V525.500 H1258" stroke="#716f64" fill="none"/>
 <path d="M1258 403.500 h17 M1258 496.500 h17" stroke="#716f64"/>
 <path d="M1258 404.500 h16 M1258 497.500 h16" stroke="#fff"/>
 <path d="M1261 391.500 h11 M1261 395.500 h11 M1261 445.500 h11 M1261 449.500 h11 M1261 453.500 h11 M1261 457.500 h11 M1261 462.500 h11 M1261 504.500 h11 M1261 508.500 h11" stroke="#9a988c"/>
 <!-- horizontal -->
 <rect x="314" y="678" width="944" height="17" fill="#d2d2ca"/>
 <rect x="1258" y="678" width="18" height="17" fill="#ece9d8"/>
 <use href="#sbtn" x="314" y="678"/><path d="M325 682.500 v8 l-4.500 -4 z" fill="#000"/>
 <use href="#sbtn" x="1241" y="678"/><path d="M1247.500 682.500 v8 l4.500 -4 z" fill="#000"/>
 <rect x="656" y="678" width="260" height="17" fill="#ebe9dd"/>
 <path d="M656.500 695 V678.500 H916" stroke="#fff" fill="none"/>
 <path d="M915.500 678 V694.500 H656" stroke="#716f64" fill="none"/>
 <path d="M684.500 678 v17 M886.500 678 v17" stroke="#716f64"/>
 <path d="M685.500 679 v15 M887.500 679 v15" stroke="#fff"/>
 <path d="M672.500 681 v11 M676.500 681 v11 M780.500 681 v11 M784.500 681 v11 M788.500 681 v11 M792.500 681 v11 M798.500 681 v11 M894.500 681 v11 M898.500 681 v11" stroke="#9a988c"/>
</svg>
<div class="a" id="status" style="left:6px;top:696px;width:1269px;height:20px;background:#ece9d8;border-top:1px solid #fff"></div>
<div class="a" style="left:6px;top:695px;width:1269px;height:1px;background:#c9c6b5"></div>
<div class="a" style="left:1157px;top:699px;width:1px;height:15px;background:#c9c6b5"></div>
<div class="a" style="left:1158px;top:699px;width:1px;height:15px;background:#fff"></div>
<svg class="a" style="left:1262px;top:702px" width="13" height="13" viewBox="0 0 13 13"><g fill="#b8b4a2"><rect x="9" y="9" width="2" height="2"/><rect x="5" y="9" width="2" height="2"/><rect x="1" y="9" width="2" height="2"/><rect x="9" y="5" width="2" height="2"/><rect x="5" y="5" width="2" height="2"/><rect x="9" y="1" width="2" height="2"/></g><g fill="#fff"><rect x="10" y="10" width="1" height="1"/><rect x="6" y="10" width="1" height="1"/><rect x="2" y="10" width="1" height="1"/><rect x="10" y="6" width="1" height="1"/><rect x="6" y="6" width="1" height="1"/><rect x="10" y="2" width="1" height="1"/></g></svg>

<!-- ============ DIALOG ============ -->
<div class="a" id="dlg" style="left:132px;top:248px;width:494px;height:367px;background:#ece9d8;border:3px solid #26469a;border-bottom-color:#101c80;border-right-color:#1a2c88;border-top:0;border-radius:8px 8px 0 0;box-shadow:inset 2px 0 0 #dce8fa,inset -2px 0 0 #dce8fa,inset 0 -2px 0 #dce4f8,-1px 0 1px rgba(190,205,230,.8)"></div>
<div class="a" id="dlgtitle" style="left:132px;top:248px;width:494px;height:29px;border-radius:8px 8px 0 0;background:linear-gradient(180deg,#0a44c0 0%,#3e84f0 5%,#2a72ec 11%,#1260e4 20%,#0648d0 42%,#0a54de 60%,#1668f6 80%,#1464f0 89%,#0a44b8 95%,#0a3a9a 100%)"></div>
<div class="a" style="left:135px;top:277px;width:488px;height:2px;background:linear-gradient(180deg,#d8e6fc,#e6eaf0)"></div>
<div class="t" style="left:139px;top:256px;font-weight:bold;font-size:13px;letter-spacing:-.3px;color:#fff;line-height:16px;height:16px;text-shadow:1px 1px 0 #0a2a80">Results Report</div>
<svg class="a" style="left:598px;top:252px" width="24" height="24" viewBox="598 252 24 24">
 <defs><linearGradient id="gx" x1="0" y1="0" x2="1" y2="1"><stop offset="0" stop-color="#e8907a"/><stop offset="0.400" stop-color="#d0482c"/><stop offset="1" stop-color="#b83820"/></linearGradient></defs>
 <rect x="600.500" y="253.500" width="20" height="20" rx="3" fill="url(#gx)" stroke="#fff"/>
 <path d="M605.500 258.500 L615.500 268.500 M615.500 258.500 L605.500 268.500" stroke="#fff" stroke-width="2.300" fill="none"/>
</svg>
<div class="a gb" style="left:149px;top:297px;width:430px;height:270px;border-radius:4px"></div>
<div class="a" style="left:154px;top:290px;width:170px;height:14px;background:#ece9d8"></div>
<div class="t" style="left:158px;top:289px;color:#1c3a94">Graph:</div>
<div class="a" style="left:197px;top:285px;width:70px;height:21px;background:#fff;border:1px solid #7f9db9"></div>
<div class="t" style="left:201px;top:289px;">1 of 1</div>
<svg class="a" style="left:249px;top:287px" width="17" height="17" viewBox="0 0 17 17"><defs><linearGradient id="gc" x1="0" y1="0" x2="0" y2="1"><stop offset="0" stop-color="#d6e0fd"/><stop offset="1" stop-color="#b0c4f4"/></linearGradient></defs><rect x="0.500" y="0.500" width="16" height="16" rx="2" fill="url(#gc)" stroke="#b4c8f6"/><path d="M4.500 6.500 l4 4 l4 -4" stroke="#4d6185" stroke-width="2" fill="none"/></svg>
<div class="btn" style="left:276px;top:286px;width:18px;height:20px;line-height:17px;border-color:#1a3a68">+</div>
<div class="btn" style="left:302px;top:286px;width:18px;height:20px;line-height:15px;border-color:#c9c7ba;color:#b8b5a5;background:#f1efe6">-</div>
<div class="t" style="left:165px;top:317px;">Select data series to include</div>
<div class="t" style="left:165px;top:453px;">Select plots to include</div>
<div class="a" style="left:173px;top:337px;width:268px;height:109px;background:#fff;border:1px solid #7f9db9"></div>
<div class="cb" style="left:176px;top:340px"></div>
<div class="t" style="left:193px;top:339px;">Signal, Ch 2</div>
<div class="cb" style="left:176px;top:355px"></div>
<div class="t" style="left:193px;top:354px;">Signal, Ch 3</div>
<div class="cb" style="left:176px;top:370px"></div>
<div class="t" style="left:193px;top:369px;">Signal, Ch 4</div>
<div class="cb" style="left:176px;top:385px"></div>
<div class="t" style="left:193px;top:384px;">Signal, Ch 5</div>
<div class="cb" style="left:176px;top:400px"></div>
<div class="t" style="left:193px;top:399px;">Signal, Ch 6</div>
<div class="cb" style="left:176px;top:415px"></div>
<div class="t" style="left:193px;top:414px;">Signal, Ch 7</div>
<div class="a" style="left:190px;top:429px;width:233px;height:15px;background:#3567be"></div>
<div class="cb" style="left:176px;top:430px"></div>
<div class="t" style="left:193px;top:429px;color:#fff">Signal, Ch 8</div>
<svg class="a" style="left:423px;top:339px" width="17" height="106" viewBox="0 0 17 106">
 <rect x="0" y="0" width="17" height="106" fill="#f8f8f5"/>
 <rect x="1" y="1" width="14" height="14" rx="2" fill="#c4cdf2"/>
 <path d="M4.500 10 l3.500 -3.500 l3.500 3.500" stroke="#3f4f78" stroke-width="2" fill="none"/>
 <rect x="1" y="91" width="14" height="14" rx="2" fill="#c4cdf2"/>
 <path d="M4.500 96 l3.500 3.500 l3.500 -3.500" stroke="#3f4f78" stroke-width="2" fill="none"/>
 <rect x="1" y="35" width="14" height="53" rx="2" fill="#c2d0f6"/>
 <path d="M5 58.5 h6 m-6 2 h6 m-6 2 h6 m-6 2 h6" stroke="#eef3fe" stroke-width="1"/>
 <path d="M6 59.5 h6 m-6 2 h6 m-6 2 h6 m-6 2 h6" stroke="#8ca0d8" stroke-width="1"/>
</svg>
<div class="a" style="left:173px;top:472px;width:268px;height:78px;background:#fff;border:1px solid #7f9db9"></div>
<div class="cb" style="left:176px;top:474px"></div>
<div class="t" style="left:193px;top:473px;">Heat</div>
<div class="cb" style="left:176px;top:489px"></div>
<div class="t" style="left:193px;top:488px;">Heat flow vs heat</div>
<div class="cb on" style="left:176px;top:504px"><svg width="9" height="9" viewBox="0 0 9 9"><path d="M1 3.500 L3.500 6 L8 1.500" stroke="#2f9a3c" stroke-width="1.800" fill="none"/></svg></div>
<div class="t" style="left:193px;top:503px;">Normalized heat flow</div>
<div class="a" style="left:190px;top:518px;width:233px;height:15px;background:#3567be"></div>
<div class="cb on" style="left:176px;top:519px"><svg width="9" height="9" viewBox="0 0 9 9"><path d="M1 3.500 L3.500 6 L8 1.500" stroke="#2f9a3c" stroke-width="1.800" fill="none"/></svg></div>
<div class="t" style="left:193px;top:518px;color:#fff">Normalized heat</div>
<div class="cb" style="left:176px;top:534px"></div>
<div class="t" style="left:193px;top:533px;">Normalized heat flow vs heat</div>
<svg class="a" style="left:423px;top:473px" width="17" height="76" viewBox="0 0 17 76">
 <rect x="0" y="0" width="17" height="76" fill="#f8f8f5"/>
 <rect x="1" y="1" width="14" height="14" rx="2" fill="#c4cdf2"/>
 <path d="M4.500 10 l3.500 -3.500 l3.500 3.500" stroke="#3f4f78" stroke-width="2" fill="none"/>
 <rect x="1" y="61" width="14" height="14" rx="2" fill="#c4cdf2"/>
 <path d="M4.500 66 l3.500 3.500 l3.500 -3.500" stroke="#3f4f78" stroke-width="2" fill="none"/>
 <rect x="1" y="26" width="14" height="31" rx="2" fill="#c2d0f6"/>
 <path d="M5 38.5 h6 m-6 2 h6 m-6 2 h6 m-6 2 h6" stroke="#eef3fe" stroke-width="1"/>
 <path d="M6 39.5 h6 m-6 2 h6 m-6 2 h6 m-6 2 h6" stroke="#8ca0d8" stroke-width="1"/>
</svg>
<div class="btn" style="left:456px;top:368px;width:90px;height:21px;line-height:19px">Select all</div>
<div class="btn" style="left:456px;top:400px;width:90px;height:21px;line-height:19px">Clear selection</div>
<div class="a" style="left:135px;top:572px;width:488px;height:1px;background:#aca899"></div>
<div class="a" style="left:135px;top:573px;width:488px;height:1px;background:#fff"></div>
<div class="btn" style="left:463px;top:583px;width:73px;height:21px;line-height:18px">&lt;&lt; Previous</div>
<div class="btn" style="left:542px;top:583px;width:73px;height:21px;line-height:18px;box-shadow:inset 0 0 0 1px #f6e8b0,inset 0 -2px 0 0 #d8b040,inset 2px 0 0 0 #e8d070,inset -2px 0 0 0 #e8d070;text-align:left;padding-left:23px">Finish</div>
<svg class="a" style="left:585px;top:585px" width="16" height="24" viewBox="0 0 16 24"><path d="M2.500 1.500 v16 l3.800 -3.600 l2.800 6.500 l2.600 -1.100 l-2.800 -6.300 h5.200 z" fill="#fff" stroke="#000" stroke-width="1.100"/></svg>

</body>
</html>
